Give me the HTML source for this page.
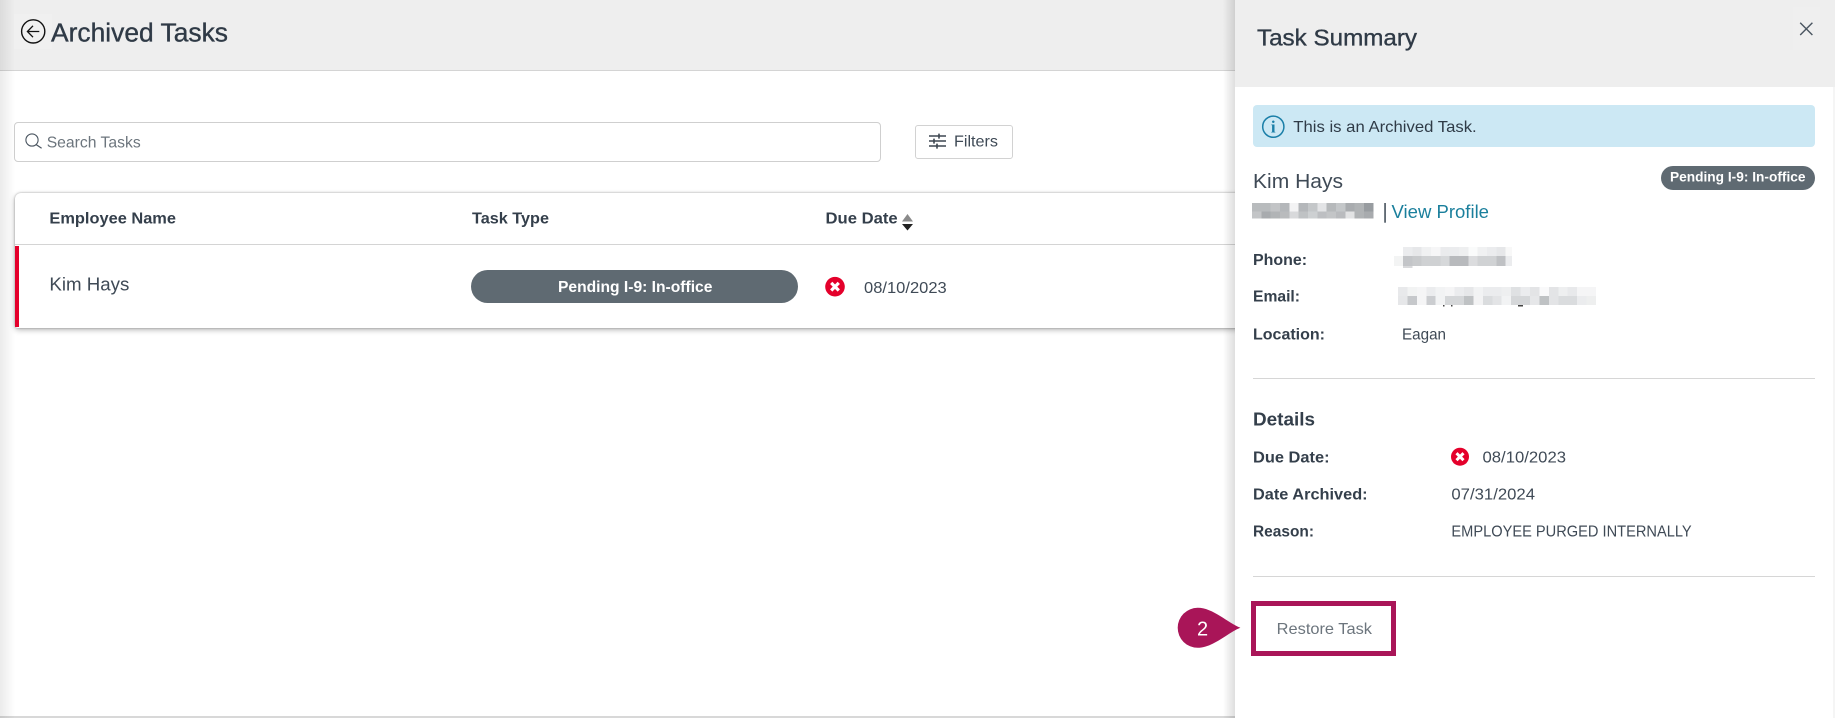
<!DOCTYPE html>
<html lang="en">
<head>
<meta charset="utf-8">
<title>Archived Tasks</title>
<style>
html,body{margin:0;padding:0;width:1835px;height:718px;overflow:hidden;background:#fff;font-family:"Liberation Sans",sans-serif}
.abs{position:absolute;box-sizing:border-box}
svg{position:absolute;left:0;top:0}
text{font-family:"Liberation Sans",sans-serif;fill:#3f4a56}
.b{font-weight:700;fill:#343f4b}
.s16{font-size:16px}
.g{fill:#6c757d}
.h{fill:#2f3a46;stroke:#2f3a46;stroke-width:.35px}
</style>
</head>
<body>
<div class="abs" style="left:0;top:0;width:1835px;height:71px;background:#eee;border-bottom:1px solid #d4d4d4"></div>
<div class="abs" style="left:14px;top:14px;width:38px;height:35px;background:#f0f0f0"></div>
<div class="abs" style="left:14px;top:122px;width:867px;height:40px;background:#fff;border:1px solid #cfcfcf;border-radius:4px"></div>
<div class="abs" style="left:915px;top:125px;width:98px;height:34px;background:#fff;border:1px solid #d2d2d2;border-radius:3px"></div>
<div class="abs" style="left:15px;top:193px;width:1240px;height:135px;background:#fff;border-radius:6px 6px 3px 3px;box-shadow:0 2px 6px rgba(0,0,0,.28),0 0 2px rgba(0,0,0,.3)"></div>
<div class="abs" style="left:15px;top:244px;width:1240px;height:1px;background:#d4d4d4"></div>
<div class="abs" style="left:15px;top:246px;width:4px;height:81px;background:#e4002b"></div>
<div class="abs" style="left:471px;top:270px;width:327px;height:33px;background:#5f6a72;border-radius:17px"></div>
<div class="abs" style="left:0;top:716px;width:1235px;height:2px;background:#d8d8d8"></div>
<div class="abs" style="left:0;top:0;width:15px;height:718px;background:linear-gradient(90deg,rgba(0,0,0,.08),rgba(0,0,0,0))"></div>
<div class="abs" style="left:1223px;top:0;width:12px;height:718px;background:linear-gradient(90deg,rgba(0,0,0,0),rgba(0,0,0,.13))"></div>

<div class="abs" style="left:1235px;top:0;width:600px;height:718px;background:#f5f5f5"></div>
<div class="abs" style="left:1235px;top:87px;width:598px;height:631px;background:#fff"></div>
<div class="abs" style="left:1235px;top:0;width:600px;height:87px;background:#eee"></div>
<div class="abs" style="left:1793px;top:7px;width:27px;height:43px;background:#efefef"></div>
<div class="abs" style="left:1253px;top:105px;width:562px;height:42px;background:#cce8f4;border-radius:4px"></div>
<div class="abs" style="left:1661px;top:166px;width:154px;height:24px;background:#5f6a72;border-radius:12px"></div>
<div class="abs" style="left:1253px;top:378px;width:562px;height:1px;background:#d6d6d6"></div>
<div class="abs" style="left:1253px;top:576px;width:562px;height:1px;background:#d6d6d6"></div>
<div class="abs" style="left:1251px;top:601px;width:145px;height:55px;background:#fff;border:5px solid #a91558"></div>

<svg width="1835" height="718" viewBox="0 0 1835 718" xmlns="http://www.w3.org/2000/svg">
  <!-- back icon -->
  <circle cx="33.2" cy="31.4" r="11.6" fill="none" stroke="#111" stroke-width="1.4"/>
  <path d="M39.3 31.5H27.6M33 25.8l-5.6 5.7 5.6 5.7" fill="none" stroke="#111" stroke-width="1.3"/>
  <text class="h" x="51" y="41.7" font-size="25.5" textLength="177" lengthAdjust="spacingAndGlyphs">Archived Tasks</text>

  <!-- search -->
  <circle cx="32" cy="140" r="6.1" fill="none" stroke="#4a5560" stroke-width="1.1"/>
  <path d="M36.2 144.6l5.4 3.6" fill="none" stroke="#4a5560" stroke-width="1.2"/>
  <text class="s16 g" x="46.7" y="147.7" textLength="94" lengthAdjust="spacingAndGlyphs">Search Tasks</text>

  <!-- filters -->
  <path d="M929 136h17M929 141h17M929 146h17" stroke="#3d4650" stroke-width="1.4" fill="none"/>
  <path d="M939 133.6v5M934 138.6v5M937 143.6v5" stroke="#3d4650" stroke-width="1.6" fill="none"/>
  <text class="s16" x="954" y="146.7" textLength="44" lengthAdjust="spacingAndGlyphs">Filters</text>

  <!-- table -->
  <text class="s16 b" x="49.4" y="223.5" textLength="126.6" lengthAdjust="spacingAndGlyphs">Employee Name</text>
  <text class="s16 b" x="472" y="223.5" textLength="77" lengthAdjust="spacingAndGlyphs">Task Type</text>
  <text class="s16 b" x="825.5" y="223.5" textLength="72.2" lengthAdjust="spacingAndGlyphs">Due Date</text>
  <path d="M907.5 214l5.5 7.5h-11z" fill="#8a8a8a"/>
  <path d="M902 224h11l-5.5 6.5z" fill="#222"/>
  <text x="49.4" y="290.7" font-size="18" textLength="80" lengthAdjust="spacingAndGlyphs">Kim Hays</text>
  <text x="558" y="292" font-size="15.5" font-weight="700" style="fill:#fff" textLength="154.4" lengthAdjust="spacingAndGlyphs">Pending I-9: In-office</text>
  <circle cx="835" cy="286.7" r="9.8" fill="#e4002b"/>
  <path d="M831.2 282.9l7.6 7.6M838.8 282.9l-7.6 7.6" stroke="#fff" stroke-width="3.2" fill="none"/>
  <text class="s16" x="864" y="293" textLength="82.7" lengthAdjust="spacingAndGlyphs">08/10/2023</text>

  <!-- panel header -->
  <text class="h" x="1257" y="45.7" font-size="23.5" textLength="160" lengthAdjust="spacingAndGlyphs">Task Summary</text>
  <path d="M1800.2 22.8l12.2 12.2M1812.4 22.8l-12.2 12.2" stroke="#4a5560" stroke-width="1.4" fill="none"/>

  <!-- alert -->
  <circle cx="1273.3" cy="126.7" r="10.6" fill="none" stroke="#1a7fa8" stroke-width="1.5"/>
  <text x="1273.3" y="132.6" font-size="17" font-weight="700" text-anchor="middle" style="font-family:'Liberation Serif',serif;fill:#1a7fa8">i</text>
  <text class="s16" x="1293.3" y="132" textLength="183.4" lengthAdjust="spacingAndGlyphs" style="fill:#2f3b47">This is an Archived Task.</text>

  <!-- name -->
  <text x="1253" y="187.8" font-size="20" textLength="90" lengthAdjust="spacingAndGlyphs">Kim Hays</text>
  <text x="1670" y="181.5" font-size="14" font-weight="700" style="fill:#fff" textLength="135.5" lengthAdjust="spacingAndGlyphs">Pending I-9: In-office</text>

  <!-- blurred name -->
  <g shape-rendering="crispEdges">
    <rect x="1252" y="203" width="9.4" height="8.7" fill="#b8bbbd"/><rect x="1261.3" y="203" width="9.4" height="8.7" fill="#b8bbbd"/><rect x="1270.7" y="203" width="9.4" height="8.7" fill="#c2c4c6"/><rect x="1280" y="203" width="9.4" height="8.7" fill="#b4b7ba"/><rect x="1289.3" y="203" width="9.4" height="8.7" fill="#f3f3f4"/><rect x="1298.7" y="203" width="9.4" height="8.7" fill="#b4b7ba"/><rect x="1308" y="203" width="9.4" height="8.7" fill="#c4c7c9"/><rect x="1317.3" y="203" width="9.4" height="8.7" fill="#e3e4e6"/><rect x="1326.7" y="203" width="9.4" height="8.7" fill="#b6b9bb"/><rect x="1336" y="203" width="9.4" height="8.7" fill="#c4c7c9"/><rect x="1345.3" y="203" width="9.4" height="8.7" fill="#a9acaf"/><rect x="1354.7" y="203" width="9.4" height="8.7" fill="#b0b3b5"/><rect x="1364" y="203" width="9.4" height="8.7" fill="#989ca0"/>
    <rect x="1252" y="211.7" width="9.4" height="6.6" fill="#c3c5c7"/><rect x="1261.3" y="211.7" width="9.4" height="6.6" fill="#a8abae"/><rect x="1270.7" y="211.7" width="9.4" height="6.6" fill="#b1b4b6"/><rect x="1280" y="211.7" width="9.4" height="6.6" fill="#b9bbbd"/><rect x="1289.3" y="211.7" width="9.4" height="6.6" fill="#d8d9db"/><rect x="1298.7" y="211.7" width="9.4" height="6.6" fill="#bfc2c4"/><rect x="1308" y="211.7" width="9.4" height="6.6" fill="#cdd0d2"/><rect x="1317.3" y="211.7" width="9.4" height="6.6" fill="#bdbfc2"/><rect x="1326.7" y="211.7" width="9.4" height="6.6" fill="#c3c5c7"/><rect x="1336" y="211.7" width="9.4" height="6.6" fill="#b9bbbe"/><rect x="1345.3" y="211.7" width="9.4" height="6.6" fill="#e2e3e4"/><rect x="1354.7" y="211.7" width="9.4" height="6.6" fill="#b0b3b5"/><rect x="1364" y="211.7" width="9.4" height="6.6" fill="#a8abae"/>
    <!-- blurred phone -->
    <rect x="1403" y="247" width="9.4" height="9" fill="#ebecee"/><rect x="1412.3" y="247" width="9.4" height="9" fill="#e6e7e9"/><rect x="1421.7" y="247" width="9.4" height="9" fill="#f0f1f2"/><rect x="1431" y="247" width="9.4" height="9" fill="#f6f6f7"/><rect x="1440.3" y="247" width="9.4" height="9" fill="#eaebed"/><rect x="1449.7" y="247" width="9.4" height="9" fill="#ebecee"/><rect x="1459" y="247" width="9.4" height="9" fill="#eeeff0"/><rect x="1468.3" y="247" width="9.4" height="9" fill="#fafbfb"/><rect x="1477.7" y="247" width="9.4" height="9" fill="#f0f1f2"/><rect x="1487" y="247" width="9.4" height="9" fill="#ebecee"/><rect x="1496.3" y="247" width="9.4" height="9" fill="#e6e7e9"/><rect x="1505.7" y="247" width="6.3" height="9" fill="#f8f8f8"/>
    <rect x="1394" y="256" width="9.4" height="10" fill="#f3f4f4"/><rect x="1403" y="256" width="9.4" height="10" fill="#c3c5c8"/><rect x="1412.3" y="256" width="9.4" height="10" fill="#c8cacc"/><rect x="1421.7" y="256" width="9.4" height="10" fill="#cfd1d3"/><rect x="1431" y="256" width="9.4" height="10" fill="#cfd1d3"/><rect x="1440.3" y="256" width="9.4" height="10" fill="#d6d8da"/><rect x="1449.7" y="256" width="9.4" height="10" fill="#b8babd"/><rect x="1459" y="256" width="9.4" height="10" fill="#b8babd"/><rect x="1468.3" y="256" width="9.4" height="10" fill="#dbdcde"/><rect x="1477.7" y="256" width="9.4" height="10" fill="#d0d2d4"/><rect x="1487" y="256" width="9.4" height="10" fill="#d0d2d4"/><rect x="1496.3" y="256" width="9.4" height="10" fill="#bfc1c4"/><rect x="1505.7" y="256" width="6.3" height="10" fill="#ebecee"/>
    <rect x="1403" y="266" width="9.4" height="2" fill="#d8d9db"/>
    <!-- blurred email -->
    <rect x="1398" y="287" width="9.5" height="9" fill="#e8e9eb"/><rect x="1407.4" y="287" width="9.5" height="9" fill="#f2f3f3"/><rect x="1416.9" y="287" width="9.5" height="9" fill="#f5f5f6"/><rect x="1426.3" y="287" width="9.5" height="9" fill="#ebecee"/><rect x="1435.7" y="287" width="9.5" height="9" fill="#f2f3f4"/><rect x="1445.1" y="287" width="9.5" height="9" fill="#f5f5f6"/><rect x="1454.6" y="287" width="9.5" height="9" fill="#ebecee"/><rect x="1464" y="287" width="9.5" height="9" fill="#e6e7e9"/><rect x="1473.4" y="287" width="9.5" height="9" fill="#f2f3f4"/><rect x="1482.9" y="287" width="9.5" height="9" fill="#ebecee"/><rect x="1492.3" y="287" width="9.5" height="9" fill="#ebecee"/><rect x="1501.7" y="287" width="9.5" height="9" fill="#eeeff0"/><rect x="1511.1" y="287" width="9.5" height="9" fill="#dfe1e3"/><rect x="1520.6" y="287" width="9.5" height="9" fill="#ebecee"/><rect x="1530" y="287" width="9.5" height="9" fill="#e3e4e6"/><rect x="1539.4" y="287" width="9.5" height="9" fill="#f9f9fa"/><rect x="1548.9" y="287" width="9.5" height="9" fill="#e3e4e6"/><rect x="1558.3" y="287" width="9.5" height="9" fill="#eeeff0"/><rect x="1567.7" y="287" width="9.5" height="9" fill="#e8e9eb"/><rect x="1577.1" y="287" width="9.5" height="9" fill="#f5f5f6"/><rect x="1586.6" y="287" width="9.4" height="9" fill="#f5f5f6"/>
    <rect x="1398" y="296" width="9.5" height="9" fill="#e6e7e9"/><rect x="1407.4" y="296" width="9.5" height="9" fill="#c6c8cb"/><rect x="1416.9" y="296" width="9.5" height="9" fill="#f5f5f6"/><rect x="1426.3" y="296" width="9.5" height="9" fill="#cbcdd0"/><rect x="1435.7" y="296" width="9.5" height="9" fill="#f2f3f4"/><rect x="1445.1" y="296" width="9.5" height="9" fill="#d5d7d9"/><rect x="1454.6" y="296" width="9.5" height="9" fill="#d5d7d9"/><rect x="1464" y="296" width="9.5" height="9" fill="#bfc2c4"/><rect x="1473.4" y="296" width="9.5" height="9" fill="#f3f3f4"/><rect x="1482.9" y="296" width="9.5" height="9" fill="#dadcde"/><rect x="1492.3" y="296" width="9.5" height="9" fill="#e3e4e6"/><rect x="1501.7" y="296" width="9.5" height="9" fill="#f2f3f4"/><rect x="1511.1" y="296" width="9.5" height="9" fill="#d5d7d9"/><rect x="1520.6" y="296" width="9.5" height="9" fill="#d5d7d9"/><rect x="1530" y="296" width="9.5" height="9" fill="#e6e7e9"/><rect x="1539.4" y="296" width="9.5" height="9" fill="#bfc2c4"/><rect x="1548.9" y="296" width="9.5" height="9" fill="#e3e4e6"/><rect x="1558.3" y="296" width="9.5" height="9" fill="#dadcde"/><rect x="1567.7" y="296" width="9.5" height="9" fill="#dadcde"/><rect x="1577.1" y="296" width="9.5" height="9" fill="#ebecee"/><rect x="1586.6" y="296" width="9.4" height="9" fill="#eeefef"/>
    <rect x="1443" y="305" width="1.5" height="1.5" fill="#444"/><rect x="1451" y="305" width="1.5" height="1.5" fill="#444"/><rect x="1518" y="305" width="5" height="1.3" fill="#444"/>
  </g>

  <rect x="1384.3" y="203" width="1.5" height="19.7" fill="#3a4652"/>
  <text x="1391.5" y="218" font-size="18" style="fill:#1a7f9c" textLength="97.5" lengthAdjust="spacingAndGlyphs">View Profile</text>

  <text class="s16 b" x="1253" y="265" textLength="54" lengthAdjust="spacingAndGlyphs">Phone:</text>
  <text class="s16 b" x="1253" y="301.5" textLength="47" lengthAdjust="spacingAndGlyphs">Email:</text>
  <text class="s16 b" x="1253" y="339.5" textLength="72" lengthAdjust="spacingAndGlyphs">Location:</text>
  <text class="s16" x="1402" y="339.5" textLength="44" lengthAdjust="spacingAndGlyphs">Eagan</text>

  <text x="1253" y="425.5" font-size="18" font-weight="700" style="fill:#343f4b" textLength="62" lengthAdjust="spacingAndGlyphs">Details</text>
  <text class="s16 b" x="1253" y="462.5" textLength="76.6" lengthAdjust="spacingAndGlyphs">Due Date:</text>
  <text class="s16 b" x="1253" y="499.5" textLength="114.6" lengthAdjust="spacingAndGlyphs">Date Archived:</text>
  <text class="s16 b" x="1253" y="536.5" textLength="61" lengthAdjust="spacingAndGlyphs">Reason:</text>

  <circle cx="1460" cy="456.7" r="9" fill="#e4002b"/>
  <path d="M1456.5 453.2l7 7M1463.5 453.2l-7 7" stroke="#fff" stroke-width="3" fill="none"/>
  <text class="s16" x="1482.5" y="462.7" textLength="83.5" lengthAdjust="spacingAndGlyphs">08/10/2023</text>
  <text class="s16" x="1451.4" y="499.7" textLength="83.6" lengthAdjust="spacingAndGlyphs">07/31/2024</text>
  <text class="s16" x="1451.4" y="536.7" font-size="16" textLength="240.3" lengthAdjust="spacingAndGlyphs">EMPLOYEE PURGED INTERNALLY</text>

  <!-- callout -->
  <path d="M1240.4 627.8C1228 623 1213 607.8 1197.7 607.8A20 20 0 0 0 1197.7 647.8C1213 647.8 1228 632.6 1240.4 627.8Z" fill="#a91558"/>
  <text x="1202.5" y="635.6" font-size="20" text-anchor="middle" style="fill:#fff">2</text>
  <text class="s16 g" x="1276.7" y="634" textLength="95.3" lengthAdjust="spacingAndGlyphs">Restore Task</text>
</svg>
</body>
</html>
